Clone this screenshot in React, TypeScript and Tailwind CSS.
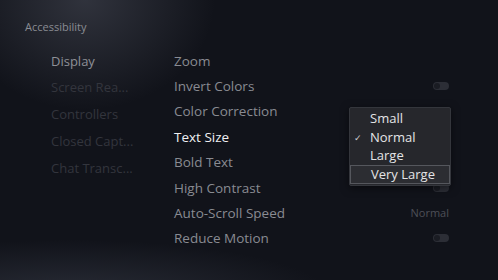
const leftNav = [
  { label: 'Display', active: true },
  { label: 'Screen Rea...', active: false },
  { label: 'Controllers', active: false },
  { label: 'Closed Capt...', active: false },
  { label: 'Chat Transc...', active: false },
]

type Row = { label: string; value?: 'toggle' | string; focused?: boolean }

const rows: Row[] = [
  { label: 'Zoom' },
  { label: 'Invert Colors', value: 'toggle' },
  { label: 'Color Correction' },
  { label: 'Text Size', focused: true },
  { label: 'Bold Text' },
  { label: 'High Contrast', value: 'toggle' },
  { label: 'Auto-Scroll Speed', value: 'Normal' },
  { label: 'Reduce Motion', value: 'toggle' },
]

const sizes = ['Small', 'Normal', 'Large', 'Very Large']

function Toggle() {
  return (
    <span className="flex h-[8px] w-[16px] items-center rounded-full bg-[#2c2e36] px-[1px]">
      <span className="h-[6px] w-[6px] rounded-full bg-[#1a1c23]" />
    </span>
  )
}

export default function App() {
  return (
    <div
      className="relative h-[280px] w-[498px] overflow-hidden bg-[#11131a] bg-[radial-gradient(ellipse_130px_110px_at_85px_0px,rgba(120,124,140,0.3),transparent),radial-gradient(ellipse_260px_55px_at_70px_295px,rgba(90,96,112,0.32),transparent)] text-[13px]"
      style={{ fontFamily: '"Open Sans", "Noto Sans", sans-serif' }}
    >
      <div className="pl-[25px] pt-[19px] text-[11px] leading-[16px] text-[#8a8c93]">
        Accessibility
      </div>
      <div className="mt-[13px] flex">
        <div className="w-[174px] shrink-0 pl-[51px]">
          {leftNav.map((item) => (
            <div
              key={item.label}
              className={`flex h-[26.8px] items-center whitespace-nowrap ${
                item.active ? 'text-[#8e9097]' : 'text-[#33353d]'
              }`}
            >
              {item.label}
            </div>
          ))}
        </div>
        <div className="w-[275px] text-[13.5px]">
          {rows.map((row) => (
            <div
              key={row.label}
              className="flex h-[25.4px] items-center justify-between"
            >
              <span className={row.focused ? 'text-[#f0f0f2]' : 'text-[#898b92]'}>
                {row.label}
              </span>
              {row.value === 'toggle' ? (
                <Toggle />
              ) : row.value ? (
                <span className="text-[11px] text-[#4d4f57]">{row.value}</span>
              ) : null}
            </div>
          ))}
        </div>
      </div>

      <div className="absolute left-[349px] top-[107px] w-[102px] rounded-[2px] border border-[#34363c] bg-[#26272c] py-[1px] text-[13px] text-[#e4e4e6] shadow-[0_2px_8px_rgba(0,0,0,0.5)]">
        {sizes.map((s) => (
          <div
            key={s}
            className={`relative flex h-[18.7px] items-center pl-[20px] leading-none ${
              s === 'Very Large' ? 'border border-[#55575d] bg-[#2c2d32] pl-[19px]' : ''
            }`}
          >
            {s === 'Normal' && (
              <span className="absolute left-[4px] text-[9px] text-[#d0d0d2]">✓</span>
            )}
            {s}
          </div>
        ))}
      </div>
    </div>
  )
}
